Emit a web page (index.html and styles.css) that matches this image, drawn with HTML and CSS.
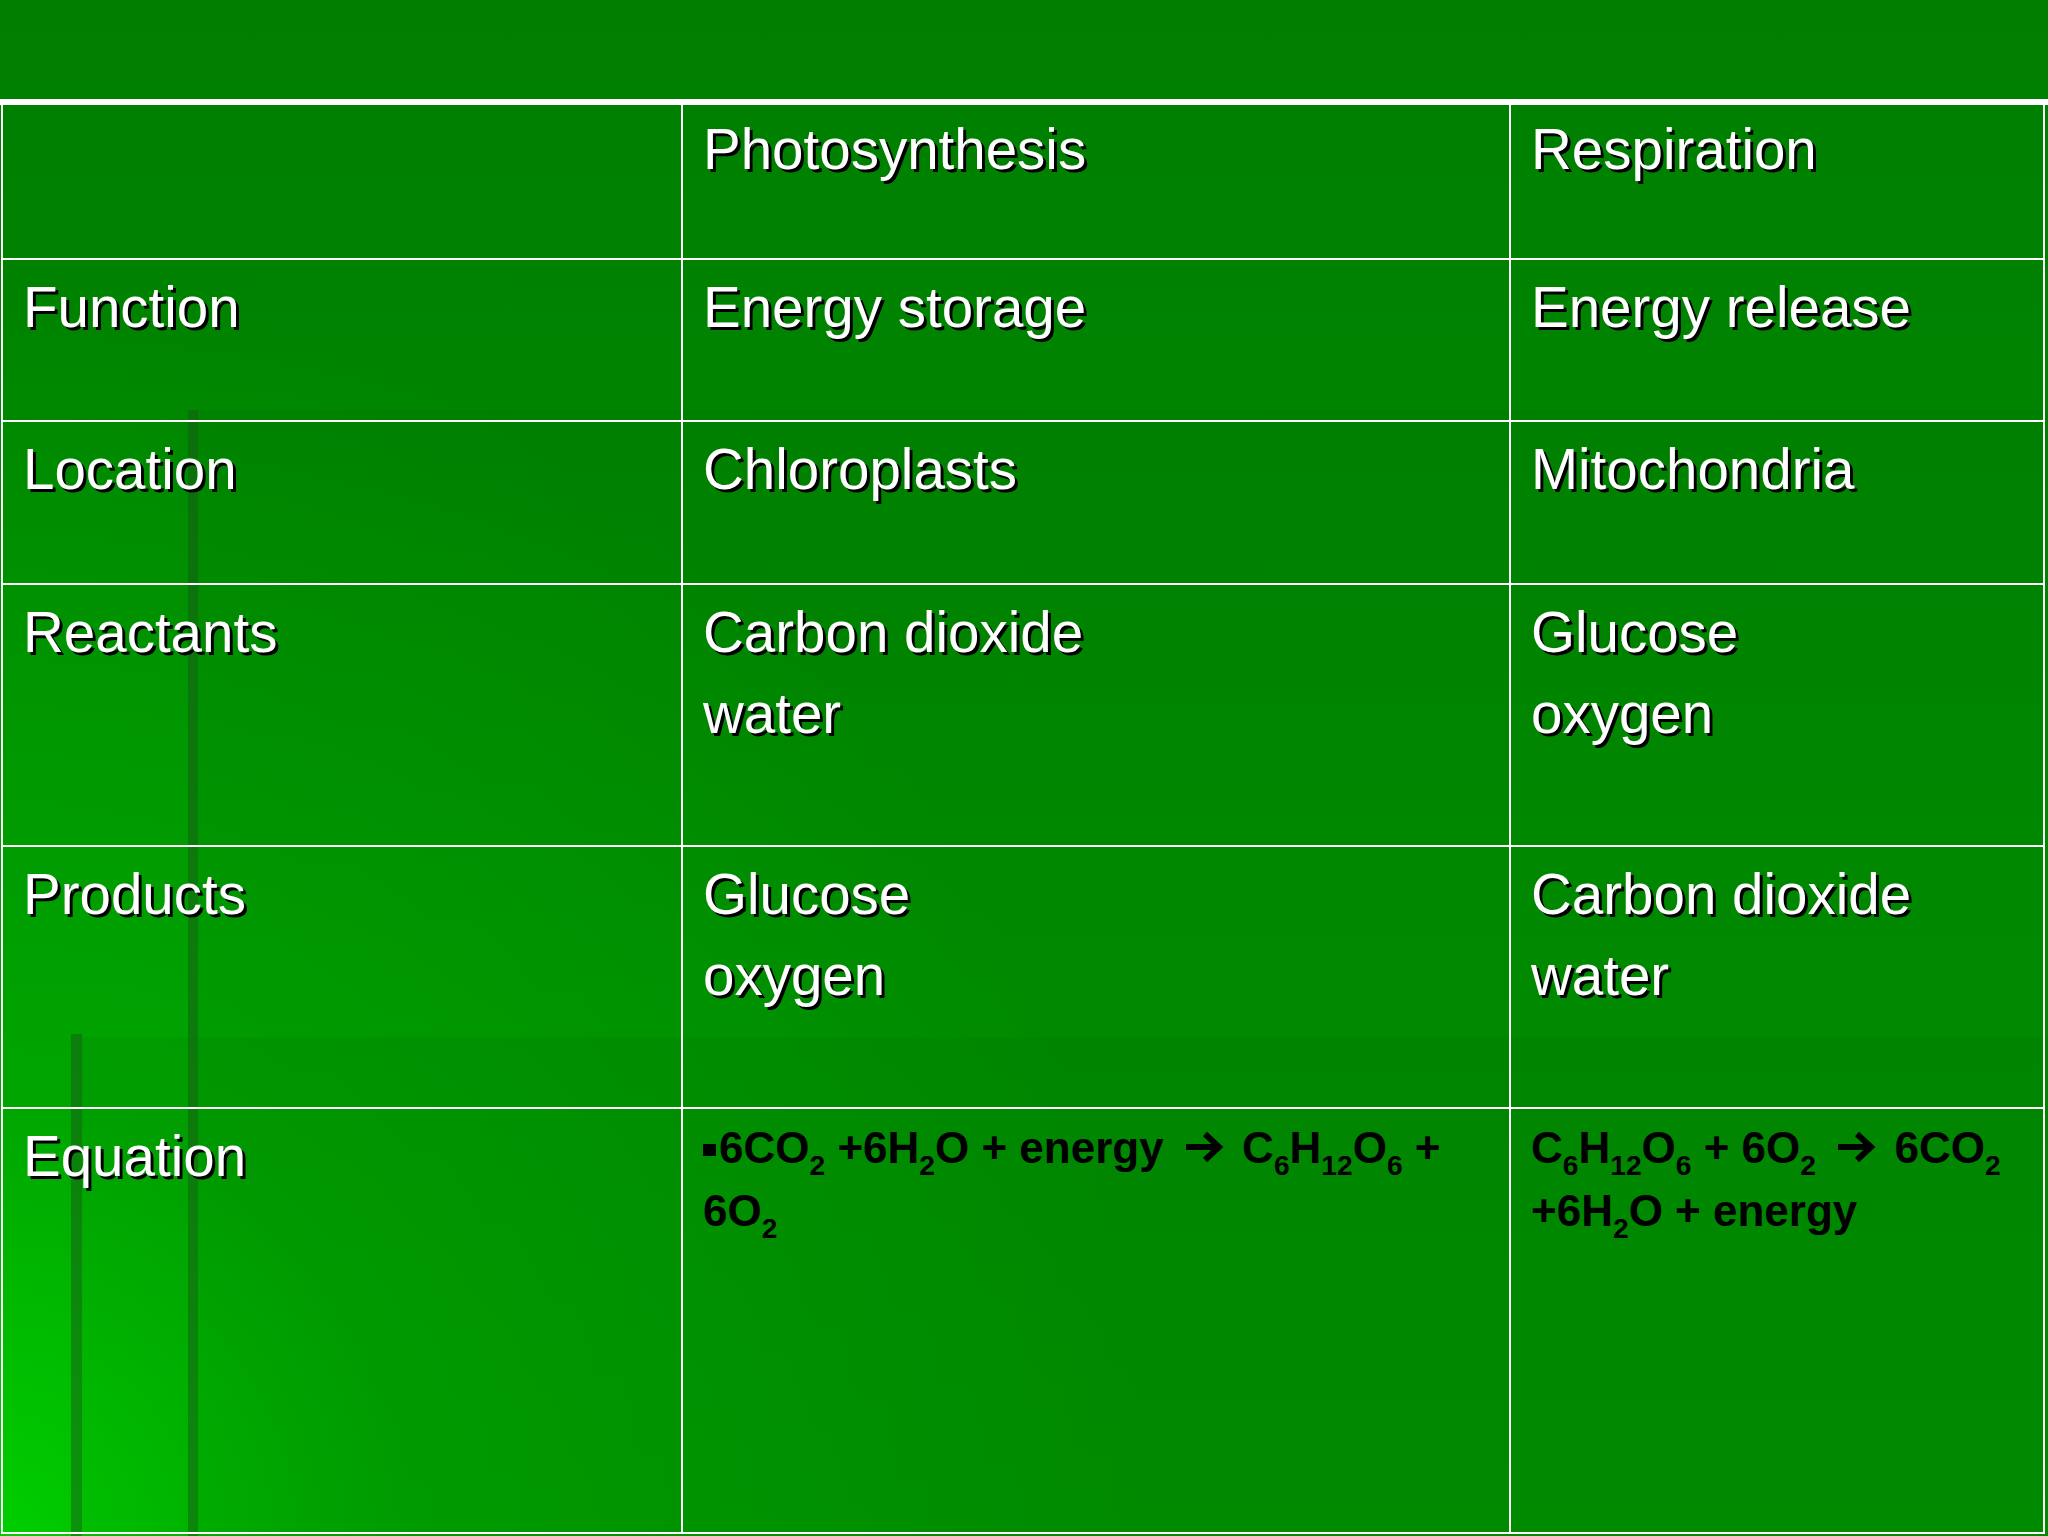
FILE: index.html
```html
<!DOCTYPE html>
<html lang="en">
<head>
<meta charset="utf-8">
<title>Photosynthesis vs Respiration</title>
<link rel="stylesheet" href="styles.css">
</head>
<body>
<div class="slide">
  <div class="title-band"></div>
  <div class="rule"></div>
  <div class="table">
    <div class="cell head"></div>
    <div class="cell head">Photosynthesis</div>
    <div class="cell head">Respiration</div>

    <div class="cell">Function</div>
    <div class="cell">Energy storage</div>
    <div class="cell">Energy release</div>

    <div class="cell">Location</div>
    <div class="cell">Chloroplasts</div>
    <div class="cell">Mitochondria</div>

    <div class="cell">Reactants</div>
    <div class="cell"><div>Carbon dioxide</div><div>water</div></div>
    <div class="cell"><div>Glucose</div><div>oxygen</div></div>

    <div class="cell">Products</div>
    <div class="cell"><div>Glucose</div><div>oxygen</div></div>
    <div class="cell"><div>Carbon dioxide</div><div>water</div></div>

    <div class="cell">Equation</div>
    <div class="cell eq"><span class="bullet"></span>6CO<sub>2</sub> +6H<sub>2</sub>O + energy <svg class="arrow" viewBox="0 0 38 32" width="38" height="32"><path d="M0 16 H33 M19 3 L33 16 L19 29" fill="none" stroke="#000" stroke-width="6"/></svg> C<sub>6</sub>H<sub>12</sub>O<sub>6</sub> +<br>6O<sub>2</sub></div>
    <div class="cell eq">C<sub>6</sub>H<sub>12</sub>O<sub>6</sub> + 6O<sub>2</sub> <svg class="arrow" viewBox="0 0 38 32" width="38" height="32"><path d="M0 16 H33 M19 3 L33 16 L19 29" fill="none" stroke="#000" stroke-width="6"/></svg> 6CO<sub>2</sub><br>+6H<sub>2</sub>O + energy</div>
  </div>
</div>
</body>
</html>
```
FILE: styles.css
```css
html, body {
  margin: 0;
  padding: 0;
}

body {
  width: 2048px;
  height: 1536px;
  overflow: hidden;
  background: #007e00;
}

.slide {
  width: 2048px;
  height: 1536px;
  font-family: "Liberation Sans", Arial, sans-serif;
  background:
    /* stripe of the upper raised panel */
    linear-gradient(rgba(25, 80, 25, 0.45), rgba(25, 80, 25, 0.45)) 188px 410px / 10px 1126px no-repeat,
    /* stripe of the lower raised panel */
    linear-gradient(rgba(25, 80, 25, 0.45), rgba(25, 80, 25, 0.45)) 71px 1034px / 11px 502px no-repeat,
    /* upper panel */
    linear-gradient(rgba(0, 0, 0, 0.04), rgba(0, 0, 0, 0.04)) 198px 410px / 1850px 1126px no-repeat,
    /* lower panel */
    linear-gradient(rgba(0, 0, 0, 0.045), rgba(0, 0, 0, 0.045)) 82px 1037px / 1966px 499px no-repeat,
    /* glow at bottom-left */
    radial-gradient(ellipse 1150px 1250px at 0% 100%, rgba(0, 215, 0, 0.85) 0%, rgba(0, 190, 0, 0.45) 35%, rgba(0, 170, 0, 0) 100%),
    linear-gradient(to bottom, #007e00 0%, #008400 25%, #008e00 60%, #009600 100%);
}

.title-band {
  height: 99px;
}

.rule {
  height: 6px;
  background: #ffffff;
}

.table {
  display: grid;
  grid-template-columns: 680px 828px 534px;
  grid-template-rows: 155px 162px 163px 262px 262px 425px;
  width: 2042px;
  margin-left: 1px;
  border-left: 2px solid #ffffff;
}

.cell {
  box-sizing: border-box;
  border-right: 2px solid #ffffff;
  border-bottom: 2px solid #ffffff;
  padding: 7px 16px 0 20px;
  color: #ffffff;
  font-size: 56.5px;
  line-height: 81px;
  text-shadow: 3px 3px 0 #000000;
  white-space: nowrap;
}

.cell.head {
  padding-top: 4px;
}

.cell.eq {
  color: #000000;
  text-shadow: none;
  font-weight: bold;
  font-size: 44px;
  line-height: 63px;
  padding-top: 7px;
}

.eq sub {
  font-size: 0.64em;
  line-height: 0;
  vertical-align: -12px;
}

.bullet {
  display: inline-block;
  width: 13px;
  height: 12px;
  background: #000000;
  margin-right: 3px;
  vertical-align: 7px;
}

.arrow {
  display: inline-block;
  vertical-align: 0;
  margin: 0 6px 0 10px;
}
```
